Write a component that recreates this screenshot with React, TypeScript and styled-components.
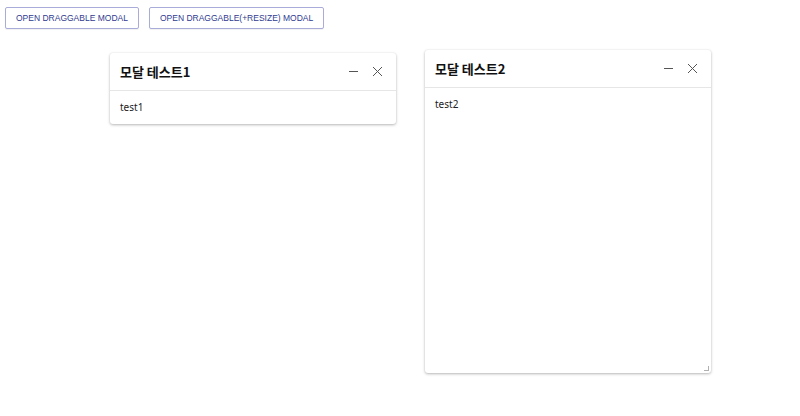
import React from "react";
import styled, { createGlobalStyle } from "styled-components";

const GlobalStyle = createGlobalStyle`
  html, body {
    margin: 0;
    padding: 0;
    background: #ffffff;
    font-family: "Noto Sans", "Noto Sans CJK KR", sans-serif;
  }
`;

const Page = styled.div`
  position: relative;
  width: 800px;
  height: 416px;
  overflow: hidden;
`;

const Toolbar = styled.div`
  display: flex;
  gap: 10px;
  padding: 7px 5px;
`;

const OpenButton = styled.button`
  height: 22px;
  padding: 0 10px;
  border: 1px solid #a9acd8;
  border-radius: 2px;
  background: #ffffff;
  color: #2f3a8f;
  font-family: "Liberation Sans", Arial, sans-serif;
  font-size: 8.5px;
  box-shadow: 0 1px 1px rgba(0, 0, 0, 0.06);
  cursor: pointer;
`;

const Modal = styled.div<{ $left: number; $top: number; $height?: number }>`
  position: absolute;
  left: ${(p) => p.$left}px;
  top: ${(p) => p.$top}px;
  width: 286px;
  height: ${(p) => (p.$height ? `${p.$height}px` : "auto")};
  display: flex;
  flex-direction: column;
  background: #ffffff;
  border-radius: 3px;
  box-shadow: 0 1px 3px rgba(0, 0, 0, 0.28), 0 0 2px rgba(0, 0, 0, 0.06);
`;

const Header = styled.div`
  display: flex;
  align-items: center;
  height: 37px;
  padding: 0 12px 0 10px;
  border-bottom: 1px solid #e6e6e6;
`;

const Title = styled.h2`
  flex: 1;
  margin: 0;
  font-family: "Noto Sans CJK KR", "Noto Sans", sans-serif;
  font-size: 13px;
  font-weight: 700;
  color: #111111;
`;

const IconButton = styled.button`
  display: flex;
  align-items: center;
  justify-content: center;
  width: 14px;
  height: 14px;
  padding: 0;
  margin-left: 10px;
  border: none;
  background: none;
  color: #555555;
  cursor: pointer;
`;

const Body = styled.div`
  flex: 1;
  padding: 9px 10px 10px;
  font-family: "Noto Sans", sans-serif;
  font-size: 10px;
  color: #222222;
`;

const ResizeHandle = styled.div`
  position: absolute;
  right: 2px;
  bottom: 2px;
  width: 4px;
  height: 4px;
  border-right: 1px solid #b0b0b0;
  border-bottom: 1px solid #b0b0b0;
`;

const MinusIcon = () => (
  <svg width="11" height="11" viewBox="0 0 11 11">
    <path d="M1 5.5h9" stroke="currentColor" strokeWidth="1" />
  </svg>
);

const CloseIcon = () => (
  <svg width="11" height="11" viewBox="0 0 11 11">
    <path d="M1 1l9 9M10 1l-9 9" stroke="currentColor" strokeWidth="1" />
  </svg>
);

type WindowProps = {
  title: string;
  text: string;
  left: number;
  top: number;
  height?: number;
  resizable?: boolean;
};

const DraggableModal = ({ title, text, left, top, height, resizable }: WindowProps) => (
  <Modal $left={left} $top={top} $height={height}>
    <Header>
      <Title>{title}</Title>
      <IconButton aria-label="minimize">
        <MinusIcon />
      </IconButton>
      <IconButton aria-label="close">
        <CloseIcon />
      </IconButton>
    </Header>
    <Body>{text}</Body>
    {resizable && <ResizeHandle />}
  </Modal>
);

export default function App() {
  return (
    <>
      <GlobalStyle />
      <Page>
        <Toolbar>
          <OpenButton>OPEN DRAGGABLE MODAL</OpenButton>
          <OpenButton>OPEN DRAGGABLE(+RESIZE) MODAL</OpenButton>
        </Toolbar>
        <DraggableModal title="모달 테스트1" text="test1" left={110} top={53} />
        <DraggableModal
          title="모달 테스트2"
          text="test2"
          left={425}
          top={50}
          height={323}
          resizable
        />
      </Page>
    </>
  );
}
